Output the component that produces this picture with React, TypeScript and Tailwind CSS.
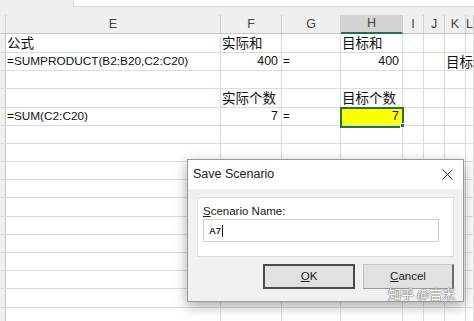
import React from 'react';

type Cell = { text: string; align?: 'right'; cjk?: boolean; selected?: boolean; overflow?: boolean };
type Row = { h: string; cells: Partial<Record<string, Cell>> };

const COLS = [
    { key: 'E', w: 'w-[215px]' },
    { key: 'F', w: 'w-[61px]' },
    { key: 'G', w: 'w-[59px]' },
    { key: 'H', w: 'w-[62px]' },
    { key: 'I', w: 'w-[21px]' },
    { key: 'J', w: 'w-[21px]' },
    { key: 'K', w: 'w-[21px]' },
    { key: 'L', w: 'flex-1' },
];

const ROWS: Row[] = [
    { h: 'h-[19px]', cells: { E: { text: '公式', cjk: true }, F: { text: '实际和', cjk: true }, H: { text: '目标和', cjk: true } } },
    {
        h: 'h-[18px]',
        cells: {
            E: { text: '=SUMPRODUCT(B2:B20,C2:C20)' },
            F: { text: '400', align: 'right' },
            G: { text: '=' },
            H: { text: '400', align: 'right' },
            K: { text: '目标和', cjk: true, overflow: true },
        },
    },
    { h: 'h-[18px]', cells: {} },
    { h: 'h-[19px]', cells: { F: { text: '实际个数', cjk: true }, H: { text: '目标个数', cjk: true } } },
    {
        h: 'h-[18px]',
        cells: {
            E: { text: '=SUM(C2:C20)' },
            F: { text: '7', align: 'right' },
            G: { text: '=' },
            H: { text: '7', align: 'right', selected: true },
        },
    },
    { h: 'h-[18px]', cells: {} },
    { h: 'h-[18px]', cells: {} },
    { h: 'h-[18px]', cells: {} },
    { h: 'h-[18px]', cells: {} },
    { h: 'h-[19px]', cells: {} },
    { h: 'h-[18px]', cells: {} },
    { h: 'h-[18px]', cells: {} },
    { h: 'h-[18px]', cells: {} },
    { h: 'h-[18px]', cells: {} },
    { h: 'h-[19px]', cells: {} },
    { h: 'h-[18px]', cells: {} },
];

function GridCell({ w, cell }: { w: string; cell?: Cell }) {
    if (!cell) return <div className={`${w} shrink-0 border-r border-[#dcdcdc]`} />;
    return (
        <div
            className={`${w} shrink-0 relative flex items-center whitespace-nowrap pl-[1px] pr-[3px] border-r ${
                cell.overflow ? 'border-r-transparent' : 'border-[#dcdcdc]'
            } ${cell.align === 'right' ? 'justify-end' : ''} ${cell.selected ? 'bg-[#ffff00]' : ''}`}
        >
            <span
                className={
                    cell.cjk
                        ? "text-[13.5px] font-['Noto_Sans_CJK_SC',sans-serif] text-[#111] leading-none"
                        : cell.align === 'right'
                          ? 'text-[12.4px] text-[#111] leading-none'
                          : 'text-[11.8px] text-[#111] leading-none'
                }
            >
                {cell.text}
            </span>
            {cell.selected && (
                <>
                    <div className="absolute -left-px -top-px w-[64px] h-[21px] border-2 border-[#217346]" />
                    <div className="absolute left-[59px] top-[15px] w-[5px] h-[5px] bg-[#217346] border border-white" />
                </>
            )}
        </div>
    );
}

function SaveScenarioDialog() {
    return (
        <div className="absolute left-[187px] top-[159px] w-[277px] h-[143px] flex flex-col border border-[#9a9a9a] bg-white shadow-[0_4px_12px_rgba(0,0,0,0.35)]">
            <div className="h-[29px] flex items-center justify-between pl-[5px] pr-[10px] bg-white">
                <span className="text-[12.5px] text-[#1a1a1a]">Save Scenario</span>
                <svg width="11" height="11" viewBox="0 0 11 11" className="text-[#333]">
                    <path d="M0.5 0.5 L10.5 10.5 M10.5 0.5 L0.5 10.5" stroke="currentColor" strokeWidth="1" fill="none" />
                </svg>
            </div>
            <div className="flex-1 flex flex-col bg-[#f0f0f0] pt-[8px] pl-[9px] pr-[9px]">
                <div className="h-[60px] flex flex-col border border-[#dcdcdc] bg-white pt-[7px] pl-[5px] pr-[14px]">
                    <span className="text-[11.5px] leading-[13px] text-[#1a1a1a]">
                        <span className="underline underline-offset-1">S</span>cenario Name:
                    </span>
                    <div className="mt-[1px] h-[23px] flex items-center border border-[#d0d0d0] bg-white pl-[5px]">
                        <span className="text-[9.5px] font-semibold text-[#333] leading-none">A7</span>
                        <span className="w-px h-[12px] bg-[#111] ml-[1px]" />
                    </div>
                </div>
                <div className="mt-[7px] flex justify-end gap-[8px]">
                    <button className="w-[92px] h-[25px] flex items-center justify-center bg-[#e1e1e1] border-2 border-[#4b4b4b] text-[11.5px] text-[#1a1a1a]">
                        <span>
                            <span className="underline underline-offset-1">O</span>K
                        </span>
                    </button>
                    <button className="w-[91px] h-[25px] flex items-center justify-center bg-[#e1e1e1] border border-[#c4c4c4] border-r-2 border-r-[#6b6b6b] border-b-[#9a9a9a] text-[11.5px] text-[#1a1a1a]">
                        <span>
                            <span className="underline underline-offset-1">C</span>ancel
                        </span>
                    </button>
                </div>
            </div>
        </div>
    );
}

export default function App() {
    return (
        <div className="relative w-[474px] h-[321px] overflow-hidden bg-white font-['Liberation_Sans',Arial,sans-serif]">
            {/* formula bar edge */}
            <div className="h-[15px] flex bg-[#efefef]">
                <div className="w-[73px]" />
                <div className="flex-1 h-[7px] bg-white border-l border-b border-[#d6d6d6]" />
            </div>

            {/* column headers */}
            <div className="h-[19px] flex bg-[#efefef] border-b border-[#c6c6c6]">
                <div className="w-[6px] shrink-0 border-r border-[#cfcfcf]" />
                {COLS.map(c => (
                    <div
                        key={c.key}
                        className={`${c.w} shrink-0 flex items-center justify-center border-r border-[#cfcfcf] text-[12.5px] text-[#444] ${
                            c.key === 'H' ? 'bg-[#d4d4d4] border-b-2 border-b-[#217346] -mb-px' : ''
                        }`}
                    >
                        {c.key}
                    </div>
                ))}
            </div>

            {/* sheet rows */}
            {ROWS.map((r, i) => (
                <div key={i} className={`${r.h} flex border-b border-[#dcdcdc]`}>
                    <div className="w-[6px] shrink-0 bg-[#efefef] border-r border-[#c6c6c6]" />
                    {COLS.map(c => (
                        <GridCell key={c.key} w={c.w} cell={r.cells[c.key]} />
                    ))}
                </div>
            ))}

            <SaveScenarioDialog />

            <div className="absolute left-[388px] top-[287px] text-[13px] leading-none text-white font-['Noto_Sans_CJK_SC',sans-serif] [text-shadow:0_0_1px_#555,0_0_1px_#777,0_0_2px_#999]">
                知乎 @吉米
            </div>
        </div>
    );
}
